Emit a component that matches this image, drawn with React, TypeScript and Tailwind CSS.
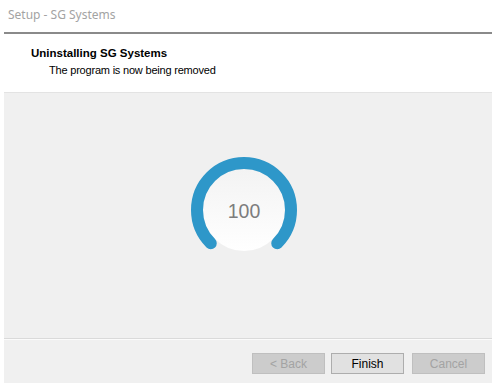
import React from "react";

function Gauge() {
  return (
    <svg width="110" height="110" viewBox="0 0 110 110">
      <defs>
        <linearGradient id="inner" x1="0" y1="0" x2="0" y2="1">
          <stop offset="0%" stopColor="#f3f3f3" />
          <stop offset="100%" stopColor="#ffffff" />
        </linearGradient>
      </defs>
      <circle cx="55" cy="55" r="41" fill="url(#inner)" />
      <path
        d="M 21.77 88.23 A 47 47 0 1 1 88.23 88.23"
        fill="none"
        stroke="#2e97c9"
        strokeWidth="12"
        strokeLinecap="round"
      />
      <text
        x="55"
        y="63"
        textAnchor="middle"
        fontFamily="'Liberation Sans', Arial, sans-serif"
        fontSize="19.5"
        fill="#7d7d7d"
      >
        100
      </text>
    </svg>
  );
}

export default function App() {
  return (
    <div
      className="w-[496px] h-[386px] bg-white flex flex-col overflow-hidden"
      style={{ fontFamily: "'Liberation Sans', Arial, sans-serif" }}
    >
      <div className="h-[32px] pl-[8px] pt-[7px] text-[12px] text-[#a3a3a3] leading-[16px] font-['Noto_Sans',sans-serif]">
        Setup - SG Systems
      </div>
      <div className="mx-[4px] flex flex-col">
        <div className="h-[2px] bg-[#8a8a8a]" />
        <div className="h-[58px] bg-white pl-[27px] pt-[12px] flex flex-col">
          <div className="text-[11.5px] leading-[14px] font-bold text-black">
            Uninstalling SG Systems
          </div>
          <div className="text-[11px] leading-[14px] tracking-[-0.2px] text-black mt-[3px] ml-[18px]">
            The program is now being removed
          </div>
        </div>
        <div className="h-[1px] bg-[#e3e3e3]" />
        <div className="h-[245px] bg-[#f0f0f0] pt-[62px] pl-[185px]">
          <Gauge />
        </div>
        <div className="h-[1px] bg-[#dadada]" />
        <div className="h-[1px] bg-[#fbfbfb]" />
        <div className="h-[43px] bg-[#f0f0f0] flex items-start pt-[13px] pl-[248px] gap-[6px] text-[12px]">
          <div className="w-[73px] h-[21px] bg-[#cccccc] border border-[#bfbfbf] text-[#a3a3a3] flex items-center justify-center">
            &lt; Back
          </div>
          <div className="w-[73px] h-[21px] bg-[#e1e1e1] border border-[#adadad] text-black flex items-center justify-center">
            Finish
          </div>
          <div className="w-[73px] h-[21px] bg-[#cccccc] border border-[#bfbfbf] text-[#a3a3a3] flex items-center justify-center ml-[2px]">
            Cancel
          </div>
        </div>
      </div>
    </div>
  );
}
